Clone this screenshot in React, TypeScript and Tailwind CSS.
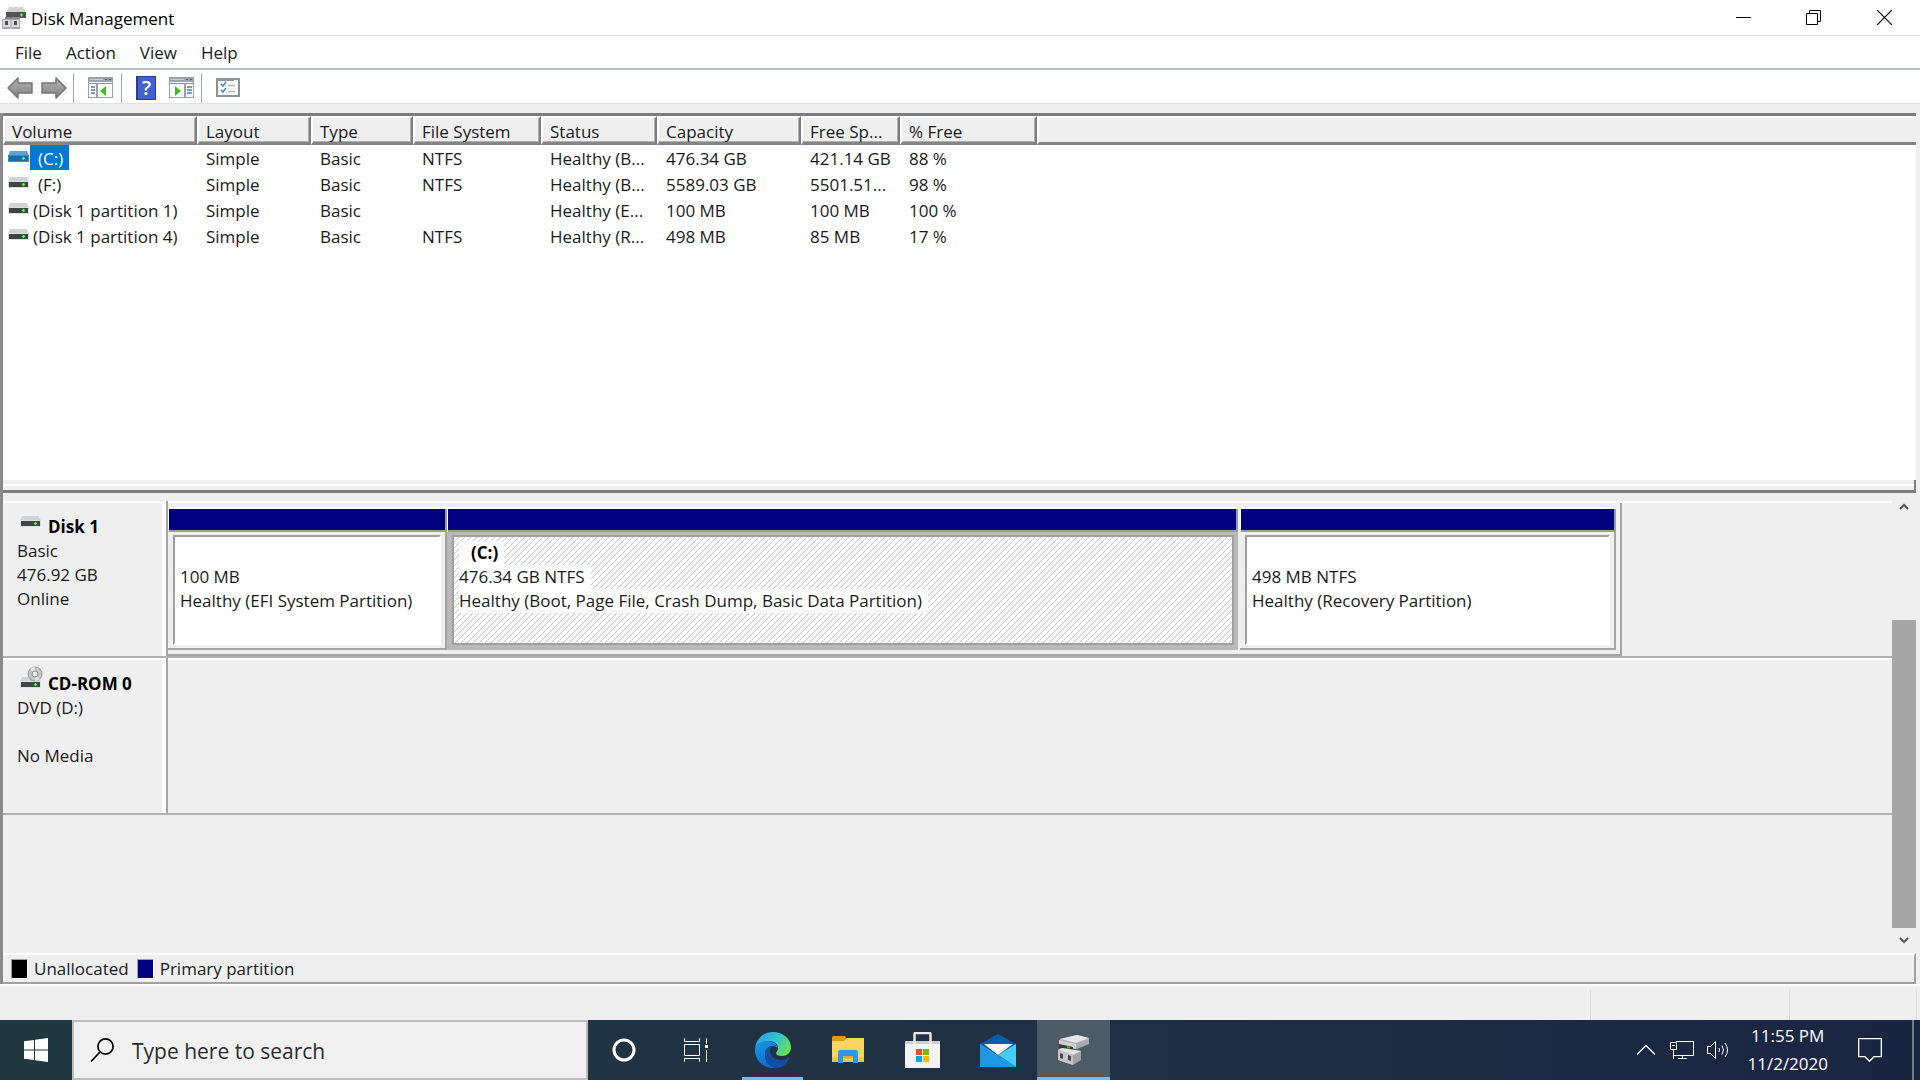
import type { ReactNode } from 'react';

type Volume = {
  name: string;
  indent?: boolean;
  selected?: boolean;
  cells: string[];
};

const columns = [
  { label: 'Volume', width: 'w-[194px]' },
  { label: 'Layout', width: 'w-[114px]' },
  { label: 'Type', width: 'w-[102px]' },
  { label: 'File System', width: 'w-[128px]' },
  { label: 'Status', width: 'w-[116px]' },
  { label: 'Capacity', width: 'w-[144px]' },
  { label: 'Free Sp...', width: 'w-[99px]' },
  { label: '% Free', width: 'w-[137px]' },
];

const volumes: Volume[] = [
  { name: '(C:)', indent: true, selected: true, cells: ['Simple', 'Basic', 'NTFS', 'Healthy (B...', '476.34 GB', '421.14 GB', '88 %'] },
  { name: '(F:)', indent: true, cells: ['Simple', 'Basic', 'NTFS', 'Healthy (B...', '5589.03 GB', '5501.51...', '98 %'] },
  { name: '(Disk 1 partition 1)', cells: ['Simple', 'Basic', '', 'Healthy (E...', '100 MB', '100 MB', '100 %'] },
  { name: '(Disk 1 partition 4)', cells: ['Simple', 'Basic', 'NTFS', 'Healthy (R...', '498 MB', '85 MB', '17 %'] },
];

function DriveIcon({ blue = false }: { blue?: boolean }) {
  return (
    <svg width="21" height="13" viewBox="0 0 21 13" className="shrink-0">
      <path d="M2 1h17l2 5H0z" fill={blue ? '#5ba3d6' : '#d0d3d6'} />
      <path d="M0 5h21v7H0z" fill={blue ? '#3a8cc8' : '#dcdfe1'} />
      <path d="M1 6h19v5H1z" fill={blue ? '#1c6ca6' : '#414446'} />
      <circle cx="15.5" cy="8.5" r="2" fill={blue ? '#1f8f9a' : '#27902a'} />
      <path d="M15.5 7v3M14 8.5h3" stroke={blue ? '#4fe0c0' : '#5cf25c'} />
    </svg>
  );
}

function CdIcon() {
  return (
    <svg width="24" height="24" viewBox="0 0 24 24" className="shrink-0">
      <path d="M2 11h17l2 5H0z" fill="#d0d3d6" />
      <path d="M0 15h21v7H0z" fill="#dcdfe1" />
      <path d="M1 16h19v5H1z" fill="#414446" />
      <circle cx="15" cy="8" r="7" fill="#c3c6c9" stroke="#979b9e" />
      <path d="M15 8 10 3a7 7 0 0 1 5-2zM15 8l5 5a7 7 0 0 1-5 2z" fill="#e2e5e6" />
      <circle cx="15" cy="8" r="3" fill="#eceeef" stroke="#8f9396" />
      <circle cx="15.5" cy="18.5" r="2" fill="#27902a" />
      <path d="M15.5 17v3M14 18.5h3" stroke="#5cf25c" />
    </svg>
  );
}

function AppIcon() {
  return (
    <svg width="24" height="23" viewBox="0 0 24 23" className="shrink-0">
      <path d="M7 0h14l3 6H4z" fill="#d0d2d4" />
      <path d="M4 5h20v6H4z" fill="#515456" />
      <circle cx="19.5" cy="8" r="2" fill="#27902a" />
      <path d="M19.5 6.5v3M18 8h3" stroke="#5cf25c" />
      <path d="M3 10h15v3H3z" fill="#85878a" />
      <path d="M0 12h18v10H0z" fill="#a9a8ac" />
      <path d="M1 13h16v7H1z" fill="#dcdcde" />
      <path d="M3 14h3v4H3zM12 14h3v4h-3z" fill="#4e4c50" />
      <path d="M8 13h2v9H8z" fill="#bdbcc0" />
    </svg>
  );
}

function ArrowIcon({ right = false }: { right?: boolean }) {
  return (
    <svg width="26" height="24" viewBox="0 0 26 24">
      <defs>
        <linearGradient id="arrow" x1="0" y1="0" x2="0" y2="1">
          <stop offset="0" stopColor="#b3b3b3" />
          <stop offset="1" stopColor="#828282" />
        </linearGradient>
      </defs>
      <path
        d={right ? 'M25 12 15 2v5H1v10h14v5z' : 'M1 12 11 2v5h14v10H11v5z'}
        fill="url(#arrow)"
        stroke="#747474"
        strokeWidth="1.5"
        strokeLinejoin="round"
      />
    </svg>
  );
}

function PaneIcon({ right = false }: { right?: boolean }) {
  return (
    <svg width="25" height="21" viewBox="0 0 25 21">
      <rect x="0.5" y="0.5" width="24" height="20" fill="#fbfbfb" stroke="#98a0a8" />
      <path d="M1 1h23v4H1z" fill="#9ba3ad" />
      <path d="M2 2.5h13" stroke="#c9ced5" />
      <path d="M17 2.5h2M21 2.5h2" stroke="#4b5663" />
      <path d="M1 6.5h23" stroke="#8d949c" />
      {right ? (
        <>
          <path d="M16 7v13" stroke="#98a0a8" strokeWidth="2" />
          <path d="M18 10h5M18 13h5M18 16h5" stroke="#4a7fb5" strokeWidth="1.5" />
          <path d="m6 9 6 5-6 5z" fill="#45b82c" />
        </>
      ) : (
        <>
          <path d="M9 7v13" stroke="#98a0a8" strokeWidth="2" />
          <path d="M3 10h4M3 13h4M3 16h4" stroke="#4a7fb5" strokeWidth="1.5" />
          <path d="m18 9-6 5 6 5z" fill="#45b82c" />
        </>
      )}
    </svg>
  );
}

function HelpIcon() {
  return (
    <span className="flex h-6 w-5 items-center justify-center border border-l-2 border-[#283c93] bg-linear-to-r from-[#4563c9] to-[#3f5fd6] text-[20px] leading-6 font-semibold text-white">
      ?
    </span>
  );
}

function ChecklistIcon() {
  return (
    <svg width="24" height="19" viewBox="0 0 24 19">
      <rect x="1" y="1" width="22" height="17" fill="#fafafa" stroke="#8c9196" strokeWidth="2" />
      <path d="M1 2h17" stroke="#8c9196" strokeWidth="2" />
      <path d="m5 6 2 2 3-4M5 12l2 2 3-4" fill="none" stroke="#3d8fd1" strokeWidth="1.5" />
      <path d="M12 7.5h7M12 13.5h7" stroke="#b5b9bd" strokeWidth="1.5" />
    </svg>
  );
}

function EdgeIcon() {
  return (
    <svg width="36" height="36" viewBox="0 0 36 36">
      <defs>
        <linearGradient id="edge-top" x1="0" y1="0.2" x2="1" y2="0.7">
          <stop offset="0" stopColor="#2a9fe8" />
          <stop offset="0.5" stopColor="#2fc3d2" />
          <stop offset="1" stopColor="#6ce04a" />
        </linearGradient>
        <linearGradient id="edge-left" x1="0" y1="0" x2="0.6" y2="1">
          <stop offset="0" stopColor="#1b9de2" />
          <stop offset="1" stopColor="#0a66c8" />
        </linearGradient>
      </defs>
      <path d="M0 17C1 6 9 0 18 0c10 0 18 7 18 15 0 6-4 9-9 9-4 0-6-1-6-3 0-1 2-2 2-5 0-4-4-7-9-7C7 9 1 12 0 17z" fill="url(#edge-top)" />
      <path d="M0 18C0 12 6 9 12 9c7 0 11 4 11 8-1-2-3-3-5-3-5 0-8 4-8 9 0 7 5 12 13 13C10 38 0 29 0 18z" fill="url(#edge-left)" />
      <path d="M18 14c-5 0-8 4-8 9 0 8 6 13 13 13 5-1 9-5 11-9 1-1 0-2-1-1-2 1-4 2-7 2-6 0-11-4-11-9 0-2 1-4 3-5z" fill="#124f9c" />
    </svg>
  );
}

function ExplorerIcon() {
  return (
    <svg width="32" height="29" viewBox="0 0 32 29">
      <path d="M1 0h12l2 3v4H0V1z" fill="#e09c07" />
      <path d="M0 5h12l3-3h17v24H0z" fill="#fcd462" />
      <path d="M0 21h32v5H0z" fill="#f6c544" />
      <path d="M8 14h16q2 0 2 2v11h-5v-7H11v7H6V16q0-2 2-2z" fill="#3a93dc" />
      <path d="M11 20h10v2H11z" fill="#e3a723" />
    </svg>
  );
}

function StoreIcon() {
  return (
    <svg width="35" height="36" viewBox="0 0 35 36">
      <path d="M0 9h35v27H0z" fill="#f3f3f3" />
      <path d="M0 9h35v3H0z" fill="#cfcfcf" />
      <path d="M9.5 12V2q0-1 1-1h14q1 0 1 1v10" fill="none" stroke="#e8e8e8" strokeWidth="2.5" />
      <path d="M11 17h6v6h-6z" fill="#f25022" />
      <path d="M18 17h6v6h-6z" fill="#7fba00" />
      <path d="M11 24h6v6h-6z" fill="#00a4ef" />
      <path d="M18 24h6v6h-6z" fill="#ffb900" />
    </svg>
  );
}

function MailIcon() {
  return (
    <svg width="36" height="33" viewBox="0 0 36 33">
      <path d="M0 10 18 0l18 10v8H0z" fill="#0a5bb0" />
      <path d="M0 10v23h36z" fill="#2aa3e8" />
      <path d="M36 10 18 21l18 12z" fill="#45cdf5" />
      <path d="M0 10 36 33H0z" fill="#1f97e3" />
      <path d="M4 10h29L18 21z" fill="#f1f3f5" />
    </svg>
  );
}

function DiskTaskIcon() {
  return (
    <svg width="32" height="30" viewBox="0 0 32 30">
      <path d="M2 4 19 0l12 3v6l-12 5L1 10z" fill="#a9abad" />
      <path d="M2 4 19 0l12 3-13 5z" fill="#e6e6e8" />
      <path d="m1 5 17 4v5L1 10z" fill="#cfd0d2" />
      <path d="m1 9 14 3v4L1 13z" fill="#36393b" />
      <path d="m9 12 3 1" stroke="#3fae3f" strokeWidth="2" />
      <path d="m0 15 4-2 19 3v9l-8 5-15-5z" fill="#a3a3a7" />
      <path d="m0 15 4-2 19 3-8 4z" fill="#e2e2e4" />
      <path d="m0 15 15 5v10L0 25z" fill="#c6c6c9" />
      <path d="m2 18 3 1v5l-3-1zM10 20l3 1v5l-3-1z" fill="#47494b" />
    </svg>
  );
}

function Separator() {
  return <span className="h-[30px] w-px bg-[#a8a8a8]" />;
}

function DiskRow({ icon, title, lines, children }: { icon: ReactNode; title: string; lines: string[]; children?: ReactNode }) {
  return (
    <section className="flex h-[157px] border-b-2 border-[#b0b0b0]">
      <div className="w-[163px] shrink-0 border-t-2 border-r-4 border-white pt-1 pl-[14px]">
        <div className="flex h-8 items-end pl-[3px]">
          <span className="flex h-[30px] w-7 items-start">{icon}</span>
          <h2 className="leading-6 font-bold text-black">{title}</h2>
        </div>
        {lines.map((line, i) => (
          <p key={i} className="h-6 leading-6">{line}</p>
        ))}
      </div>
      <div className="min-w-0 grow border-l-2 border-[#a5a5a5]">
        <div className="h-full border-t-2 border-white">{children}</div>
      </div>
    </section>
  );
}

function Partition({ width, name, lines, selected }: { width: string; name?: string; lines: string[]; selected?: boolean }) {
  return (
    <div className={`flex flex-col ${width}`}>
      <div className="border-t-2 border-l border-white">
        <div className="h-[23px] border-r-2 border-b-2 border-[#9c9c9c] bg-[#000080]" />
      </div>
      <div className={`grow border-r-2 border-b-2 py-[3px] pl-[5px] ${selected ? 'border-[#b9b9b9] bg-[#b9b9b9] pr-[2px]' : 'border-[#a5a5a5] pr-1'}`}>
        <div
          className={`flex h-full flex-col items-start border-2 border-t-[#a0a0a0] border-l-[#a0a0a0] pt-1 pl-[5px] ${
            selected
              ? 'border-[#a0a0a0] bg-[linear-gradient(135deg,#fff_40%,#cacaca_40%,#cacaca_50%,#fff_50%,#fff_90%,#cacaca_90%)] bg-size-[6px_6px]'
              : 'border-white bg-white'
          }`}
        >
          <span className={`h-6 pr-[6px] pl-3 leading-6 font-bold text-black ${selected ? 'bg-white' : ''}`}>{name}</span>
          {lines.map((line) => (
            <span key={line} className="h-6 bg-white pr-[6px] leading-6 whitespace-nowrap">{line}</span>
          ))}
        </div>
      </div>
    </div>
  );
}

function TaskButton({ label, className = 'w-[75px]', children }: { label: string; className?: string; children: ReactNode }) {
  return (
    <button aria-label={label} className={`flex h-full items-center justify-center ${className}`}>
      {children}
    </button>
  );
}

export default function App() {
  return (
    <div className="flex h-screen min-h-[800px] flex-col overflow-hidden bg-[#efefef] font-['Open_Sans','Noto_Sans',sans-serif] text-[17px] text-[#1a1a1a]">
      {/* Title bar */}
      <header className="flex h-9 shrink-0 items-center border-b border-[#e5e5e5] bg-white pt-[2px] pl-[2px]">
        <AppIcon />
        <h1 className="grow pl-[5px] text-black">Disk Management</h1>
        <button aria-label="Minimize" className="flex h-full w-[70px] items-center justify-center pb-[3px]">
          <svg width="15" height="15" viewBox="0 0 15 15" stroke="#000"><path d="M0 7.5h15" /></svg>
        </button>
        <button aria-label="Restore" className="flex h-full w-[70px] items-center justify-center pb-[3px]">
          <svg width="15" height="15" viewBox="0 0 15 15" fill="none" stroke="#000"><path d="M.5 3.5h11v11H.5zM3.5 3V.5h11v11H12" /></svg>
        </button>
        <button aria-label="Close" className="flex h-full w-[72px] items-center justify-center pb-[3px]">
          <svg width="15" height="15" viewBox="0 0 15 15" stroke="#000" strokeWidth="1.2"><path d="m0 0 15 15M15 0 0 15" /></svg>
        </button>
      </header>

      {/* Menu */}
      <nav className="flex h-[34px] shrink-0 items-center gap-6 border-b-2 border-[#bcbfc1] bg-white pt-[2px] pl-[15px]">
        <button>File</button>
        <button>Action</button>
        <button>View</button>
        <button>Help</button>
      </nav>

      {/* Toolbar */}
      <div className="flex h-[34px] shrink-0 items-center border-b border-[#e2e2e2] bg-white pt-[2px] pl-[7px]">
        <button aria-label="Back" className="mr-2"><ArrowIcon /></button>
        <button aria-label="Forward" className="mr-[6px]"><ArrowIcon right /></button>
        <Separator />
        <button aria-label="Show/Hide Console Tree" className="mr-2 ml-[14px]"><PaneIcon /></button>
        <Separator />
        <button aria-label="Help" className="mr-[13px] ml-[14px]"><HelpIcon /></button>
        <button aria-label="Show/Hide Action Pane" className="mr-[7px]"><PaneIcon right /></button>
        <Separator />
        <button aria-label="Properties" className="ml-[14px]"><ChecklistIcon /></button>
      </div>

      <main className="mt-[9px] mr-1 flex min-h-0 grow flex-col border-l-3 border-[#8a8a8a]">
        {/* Volume list */}
        <div className="flex min-h-0 grow-377 basis-0 flex-col border-t-3 border-[#7d7d7d] bg-white">
          <div className="min-h-0 grow overflow-hidden">
            <table className="w-full table-fixed border-collapse text-left">
              <thead>
                <tr className="bg-[#efefef]">
                  {columns.map((col) => (
                    <th key={col.label} className={`p-0 font-normal ${col.width}`}>
                      <div className="h-[29px] border-t-2 border-r-2 border-b-3 border-l-2 border-t-[#fafafa] border-r-[#7d7d7d] border-b-[#858585] border-l-white pt-[2px] pl-[7px] leading-6 shadow-[inset_-1px_-1px_0_#b0b0b0]">{col.label}</div>
                    </th>
                  ))}
                  <th className="p-0"><div className="h-[29px] border-t-2 border-b-3 border-l-2 border-t-[#fafafa] border-b-[#858585] border-l-white" /></th>
                </tr>
              </thead>
              <tbody>
                {volumes.map((v) => (
                  <tr key={v.name}>
                    <td className="p-0">
                      <div className="flex h-[26px] items-start pl-[5px]">
                        <span className="w-[22px] pt-[5px]"><DriveIcon blue={v.selected} /></span>
                        <span className={`h-[25px] pt-[2px] leading-6 whitespace-nowrap ${v.indent ? 'pr-[6px] pl-2' : 'pl-[3px]'} ${v.selected ? 'bg-[#0078d7] text-white' : ''}`}>{v.name}</span>
                      </div>
                    </td>
                    {v.cells.map((cell, i) => (
                      <td key={i} className="p-0 pt-[2px] pl-[9px] leading-6 whitespace-nowrap">{cell}</td>
                    ))}
                    <td className="p-0" />
                  </tr>
                ))}
              </tbody>
            </table>
          </div>
          <div className="h-[13px] shrink-0 border-r-2 border-b-3 border-[#7d7d7d] bg-[#efefef] pt-1">
            <div className="h-[2px] bg-white" />
          </div>
        </div>

        {/* Graphical view */}
        <div className="flex min-h-0 grow-460 basis-0">
          <div className="min-w-0 grow overflow-hidden pt-2">
            <DiskRow icon={<span className="pt-[6px]"><DriveIcon /></span>} title="Disk 1" lines={['Basic', '476.92 GB', 'Online']}>
              <div className="mr-[270px] flex h-full border-r-2 border-b-2 border-[#a5a5a5] pt-1 pr-1 pb-1">
                <Partition width="w-[279px] shrink-0" lines={['100 MB', 'Healthy (EFI System Partition)']} />
                <Partition width="grow" selected name="(C:)" lines={['476.34 GB NTFS', 'Healthy (Boot, Page File, Crash Dump, Basic Data Partition)']} />
                <Partition width="w-[376px] shrink-0 ml-[2px]" lines={['498 MB NTFS', 'Healthy (Recovery Partition)']} />
              </div>
            </DiskRow>
            <DiskRow icon={<CdIcon />} title="CD-ROM 0" lines={['DVD (D:)', '', 'No Media']} />
          </div>
          <div className="flex w-6 shrink-0 flex-col">
            <button aria-label="Scroll up" className="flex h-[26px] shrink-0 items-center justify-center">
              <svg width="10" height="7" viewBox="0 0 10 7" fill="none" stroke="#555" strokeWidth="2"><path d="m1 6 4-4 4 4" /></svg>
            </button>
            <div className="grow" />
            <div className="h-[67%] bg-[#a6a6a6]" />
            <button aria-label="Scroll down" className="flex h-[25px] shrink-0 items-center justify-center">
              <svg width="10" height="7" viewBox="0 0 10 7" fill="none" stroke="#555" strokeWidth="2"><path d="m1 1 4 4 4-4" /></svg>
            </button>
          </div>
        </div>

        {/* Legend */}
        <div className="flex h-[31px] shrink-0 items-center border-t-2 border-r-2 border-b-2 border-t-white border-r-[#a0a0a0] border-b-[#a0a0a0] pt-px pl-2">
          <span className="mr-[6px] h-5 w-[17px] border border-[#a0a0a0] border-r-white border-b-white bg-black" />
          Unallocated
          <span className="mr-[6px] ml-2 h-5 w-[17px] border border-[#a0a0a0] border-r-white border-b-white bg-[#000080]" />
          Primary partition
        </div>
      </main>

      {/* Status bar */}
      <div className="flex h-9 shrink-0 justify-end border-t-2 border-white pt-1 pr-[3px]">
        <span className="w-[199px] border-l border-[#d9d9d9]" />
        <span className="w-[128px] border-x border-[#d9d9d9]" />
      </div>

      {/* Taskbar */}
      <footer className="flex h-[60px] shrink-0 bg-linear-to-r from-[#22383f] via-[#203144] to-[#1a2542] text-white">
        <button aria-label="Start" className="flex w-[72px] items-center justify-center">
          <svg width="24" height="24" viewBox="0 0 24 24" fill="#fff"><path d="M0 3.3 10 2v9.500H0zM11 1.8 24 0v11.500H11zM0 12.500h10V22L0 20.700zM11 12.500h13V24l-13-1.800z" /></svg>
        </button>
        <label className="flex w-[516px] items-center border-2 border-[#bdbdbd] bg-[#f1f1f1] pl-4">
          <svg width="24" height="24" viewBox="0 0 24 24" fill="none" stroke="#000" strokeWidth="1.7"><circle cx="15.5" cy="8.5" r="7.6" /><path d="M10 14 1 23.5" /></svg>
          <input aria-label="Search" placeholder="Type here to search" className="ml-[18px] w-80 bg-transparent pt-1 text-[21px] text-[#2b2b2b] outline-none placeholder:text-[#2b2b2b]" />
        </label>
        <TaskButton label="Cortana" className="w-[72px]">
          <svg width="24" height="24" viewBox="0 0 24 24" fill="none" stroke="#fff" strokeWidth="3"><circle cx="12" cy="12" r="10" /></svg>
        </TaskButton>
        <TaskButton label="Task View" className="mr-[3px] w-[72px]">
          <svg width="24" height="24" viewBox="0 0 24 24" fill="none" stroke="#fff"><path d="M.5 0v3.5h15V0M.5 6.5h15v11H.5zM.5 24v-3.5h15V24M22.5 0v6M22.5 12v12" /><rect x="21" y="7" width="3" height="3" fill="#fff" stroke="none" /></svg>
        </TaskButton>
        <TaskButton label="Microsoft Edge" className="mx-[7px] w-[61px] shadow-[inset_0_-3px_0_#76b9ed]"><EdgeIcon /></TaskButton>
        <TaskButton label="File Explorer"><ExplorerIcon /></TaskButton>
        <TaskButton label="Microsoft Store"><StoreIcon /></TaskButton>
        <TaskButton label="Mail"><MailIcon /></TaskButton>
        <TaskButton label="Disk Management" className="ml-[2px] w-[73px] bg-[#4d5b66] shadow-[inset_0_-3px_0_#76b9ed]"><DiskTaskIcon /></TaskButton>

        {/* Tray */}
        <div className="flex grow items-center justify-end">
          <button aria-label="Show hidden icons" className="mr-[15px]">
            <svg width="18" height="10" viewBox="0 0 18 10" fill="none" stroke="#fff" strokeWidth="1.3"><path d="m0 9.5 9-9 9 9" /></svg>
          </button>
          <button aria-label="Network" className="mr-[13px]">
            <svg width="24" height="18" viewBox="0 0 24 18" fill="none" stroke="#fff"><path d="M6 .5h17.5v14H4M.5 1.5h6v7h-6zM3.5 9v9M2 4.500h3M12.500 15v2.500M8 17.500h9" /></svg>
          </button>
          <button aria-label="Volume" className="mr-[17px]">
            <svg width="23" height="18" viewBox="0 0 23 18" fill="none" stroke="#fff"><path d="M.5 5.5h3l5-5v17l-5-5h-3zM12 7q1 2 0 4M15 4.500q3 4.500 0 9M18 2q5 7 0 14" /></svg>
          </button>
          <div className="mr-[30px] text-center leading-7">
            <p>11:55 PM</p>
            <p>11/2/2020</p>
          </div>
          <button aria-label="Notifications" className="mr-[30px]">
            <svg width="24" height="25" viewBox="0 0 24 25" fill="none" stroke="#fff" strokeWidth="1.3"><path d="M.7.7h22.600v18H16l-4.500 4.600L7 18.700H.7z" /></svg>
          </button>
          <div className="mr-[6px] h-full w-[2px] bg-[#737c8d]" />
        </div>
      </footer>
    </div>
  );
}
